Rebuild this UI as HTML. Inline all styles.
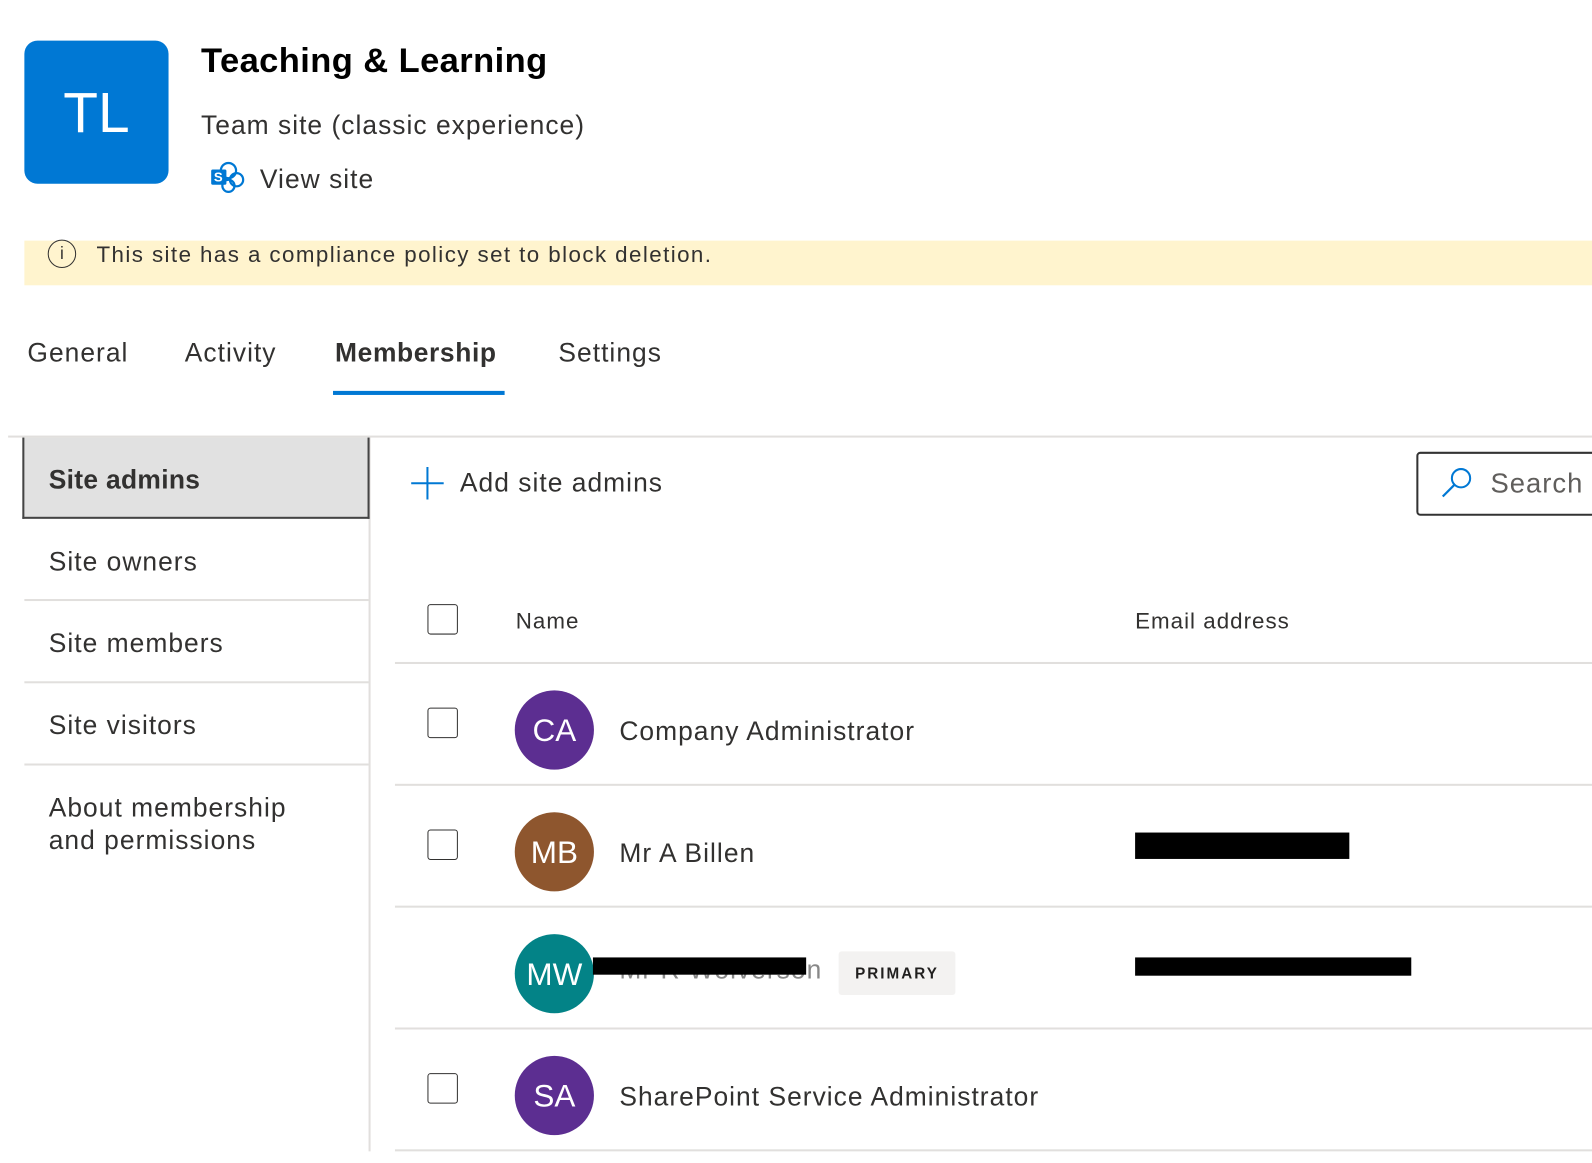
<!DOCTYPE html>
<html><head><meta charset="utf-8"><style>
html,body{margin:0;padding:0;background:#fff;width:1592px;height:1162px;overflow:hidden}
#w{position:absolute;left:0;top:0;width:1568px;height:1145px;transform:scale(1.0153);transform-origin:0 0;font-family:"Liberation Sans",sans-serif;color:#323130;letter-spacing:1px}
.a{position:absolute;white-space:nowrap}
.hl{position:absolute;height:2px;background:#e1dfdd}
.cb{position:absolute;left:421px;width:28px;height:28px;border:1.5px solid #323130;border-radius:3px}
.av{position:absolute;left:507px;width:78px;height:78px;border-radius:50%;color:#fff;font-size:31px;line-height:80px;text-align:center;letter-spacing:0}
.nm{position:absolute;left:610px;font-size:26px;color:#323130;top:0}
.red{position:absolute;background:#000}
</style></head><body><div id="w">
<div class="a" style="left:24px;top:40px;width:142px;height:141px;background:#0078d4;border-radius:13px;color:#fff;font-size:56px;line-height:141px;text-align:center;letter-spacing:0">TL</div>
<div class="a" style="left:198px;top:41px;font-size:34px;font-weight:bold;color:#000;letter-spacing:0.4px">Teaching &amp; Learning</div>
<div class="a" style="left:198px;top:108px;font-size:26px;color:#323130">Team site (classic experience)</div>
<svg class="a" style="left:206px;top:157px" width="36" height="36" viewBox="0 0 36 36"><circle cx="19" cy="11" r="7.5" fill="none" stroke="#0078d4" stroke-width="2.2"/><circle cx="27" cy="20" r="6.5" fill="none" stroke="#0078d4" stroke-width="2.2"/><circle cx="19" cy="26" r="6" fill="none" stroke="#0078d4" stroke-width="2.2"/><rect x="2" y="10" width="15" height="15" rx="1.5" fill="#0078d4"/><text x="9.5" y="22" font-size="13" font-weight="bold" fill="#fff" text-anchor="middle" font-family="Liberation Sans">S</text></svg>
<div class="a" style="left:256px;top:161px;font-size:26px;color:#323130">View site</div>
<div class="a" style="left:24px;top:237px;width:1544px;height:44px;background:#fff4ce"></div>
<div class="a" style="left:47px;top:236px;width:26px;height:26px;border:1.5px solid #323130;border-radius:50%;font-size:17px;line-height:26px;text-align:center;letter-spacing:0">i</div>
<div class="a" style="left:95px;top:238px;font-size:22px;color:#323130;letter-spacing:1.4px">This site has a compliance policy set to block deletion.</div>
<div class="a" style="left:27px;top:332px;font-size:26px">General</div>
<div class="a" style="left:182px;top:332px;font-size:26px">Activity</div>
<div class="a" style="left:330px;top:332px;font-size:26px;font-weight:bold;letter-spacing:0.6px">Membership</div>
<div class="a" style="left:550px;top:332px;font-size:26px">Settings</div>
<div class="a" style="left:328px;top:385px;width:169px;height:4px;background:#0078d4"></div>
<div class="hl" style="left:8px;top:429px;width:1560px"></div>
<div class="a" style="left:363px;top:430px;width:2px;height:704px;background:#e1dfdd"></div>
<div class="a" style="left:22px;top:431px;width:338px;height:78px;background:#e1e1e1;border:2px solid #444;border-top:none"></div>
<div class="a" style="left:48px;top:457px;font-size:26px;font-weight:bold;letter-spacing:0.3px">Site admins</div>
<div class="a" style="left:48px;top:538px;font-size:26px">Site owners</div>
<div class="hl" style="left:24px;top:590px;width:339px"></div>
<div class="a" style="left:48px;top:618px;font-size:26px">Site members</div>
<div class="hl" style="left:24px;top:671px;width:339px"></div>
<div class="a" style="left:48px;top:699px;font-size:26px">Site visitors</div>
<div class="hl" style="left:24px;top:752px;width:339px"></div>
<div class="a" style="left:48px;top:779px;font-size:26px;line-height:32px">About membership<br>and permissions</div>
<svg class="a" style="left:404px;top:459px" width="34" height="34"><path d="M17 1V33M1 17H33" stroke="#0078d4" stroke-width="2"/></svg>
<div class="a" style="left:453px;top:460px;font-size:26px">Add site admins</div>
<div class="a" style="left:1395px;top:445px;width:200px;height:59px;border:2px solid #333;border-radius:4px"></div>
<svg class="a" style="left:1418px;top:458px" width="36" height="36"><circle cx="21" cy="13" r="9" fill="none" stroke="#0078d4" stroke-width="2"/><path d="M14.5 19.5L3 31" stroke="#0078d4" stroke-width="2.2"/></svg>
<div class="a" style="left:1468px;top:461px;font-size:27px;color:#605e5c">Search a</div>
<div class="cb" style="top:595px"></div>
<div class="a" style="left:508px;top:599px;font-size:22px">Name</div>
<div class="a" style="left:1118px;top:599px;font-size:22px">Email address</div>
<div class="hl" style="left:389px;top:652px;width:1179px"></div>
<div class="cb" style="top:697px"></div>
<div class="av" style="top:680px;background:#5c2e91">CA</div>
<div class="nm" style="top:705px">Company Administrator</div>
<div class="hl" style="left:389px;top:772px;width:1179px"></div>
<div class="cb" style="top:817px"></div>
<div class="av" style="top:800px;background:#8e562e">MB</div>
<div class="nm" style="top:825px">Mr A Billen</div>
<div class="red" style="left:1118px;top:820px;width:211px;height:26px"></div>
<div class="hl" style="left:389px;top:892px;width:1179px"></div>
<div class="av" style="top:920px;background:#038387">MW</div>
<div class="nm" style="top:940px;color:#888">Mr R Wolverson</div>
<div class="red" style="left:584px;top:943px;width:210px;height:17px"></div>
<div class="a" style="left:826px;top:937px;width:115px;height:43px;background:#f3f2f1;border-radius:3px;font-size:15px;letter-spacing:2px;font-weight:bold;line-height:45px;text-align:center;color:#201f1e">PRIMARY</div>
<div class="red" style="left:1118px;top:943px;width:272px;height:18px"></div>
<div class="hl" style="left:389px;top:1012px;width:1179px"></div>
<div class="cb" style="top:1057px"></div>
<div class="av" style="top:1040px;background:#5c2e91">SA</div>
<div class="nm" style="top:1065px">SharePoint Service Administrator</div>
<div class="hl" style="left:389px;top:1132px;width:1179px"></div>
</div></body></html>
